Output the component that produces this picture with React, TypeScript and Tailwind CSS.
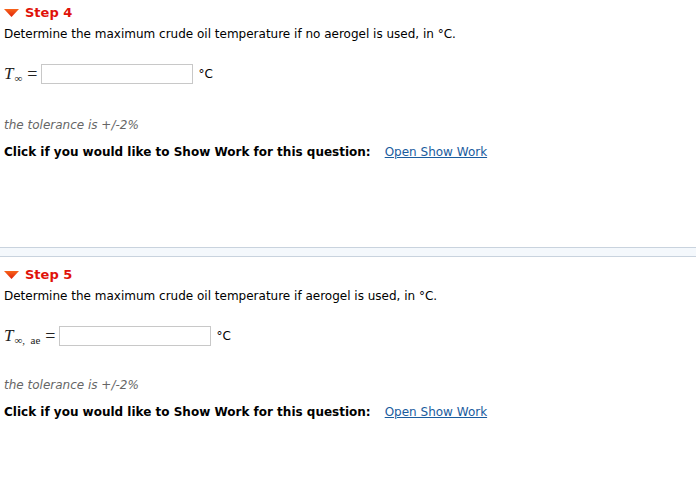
import React from "react";

function Tri() {
  return (
    <svg width="15" height="8" viewBox="0 0 15 8" className="block">
      <defs>
        <linearGradient id="tg" x1="0" y1="0" x2="0" y2="1">
          <stop offset="0" stopColor="#f7641a" />
          <stop offset="1" stopColor="#e0200a" />
        </linearGradient>
      </defs>
      <polygon points="0,0 15,0 7.5,8" fill="url(#tg)" />
    </svg>
  );
}

function Section({
  step,
  desc,
  sub,
  h,
  pt,
  tolMt,
}: {
  step: string;
  desc: string;
  sub: React.ReactNode;
  h: string;
  pt: string;
  tolMt: string;
}) {
  return (
    <div className={`${h} ${pt} px-[4px]`}>
      <div className="flex items-center h-[16px]">
        <Tri />
        <span className="ml-[6px] text-[13px] font-bold text-[#e0120a] leading-[16px]">{step}</span>
      </div>
      <div className="mt-[5px] text-[12px] leading-[16px] text-black">{desc}</div>
      <div className="mt-[22px] flex items-center h-[20px]">
        <span className="font-['Liberation_Serif',serif] text-[17px] italic leading-[20px] text-[#222]">T</span>
        <span className="font-['Liberation_Serif',serif] text-[11px] leading-none mt-[9px] ml-[1px] text-[#222] whitespace-pre">{sub}</span>
        <span className="font-['Liberation_Serif',serif] text-[18px] leading-[20px] ml-[5px] text-[#222]">=</span>
        <div className="ml-[4px] w-[152px] h-[20px] border border-[#c8c8c8] bg-white" />
        <span className="ml-[5px] text-[12px] text-black">°C</span>
      </div>
      <div className={`${tolMt} text-[12px] italic text-[#666] leading-[16px]`}>the tolerance is +/-2%</div>
      <div className="mt-[11px] flex items-center leading-[16px]">
        <span className="text-[12px] font-bold text-black">Click if you would like to Show Work for this question:</span>
        <a href="#" className="ml-[14px] text-[12px] text-[#1a5c9e] underline">Open Show Work</a>
      </div>
    </div>
  );
}

export default function App() {
  return (
    <div className="w-[696px] h-[488px] bg-white font-['DejaVu_Sans',Verdana,sans-serif] overflow-hidden">
      <Section
        h="h-[247px]"
        pt="pt-[5px]"
        tolMt="mt-[33px]"
        step="Step 4"
        desc="Determine the maximum crude oil temperature if no aerogel is used, in °C."
        sub={<>∞</>}
      />
      <div className="h-[10px] border-y border-[#c9d3de] bg-[#f4f8fc]" />
      <Section
        h="h-[231px]"
        pt="pt-[10px]"
        tolMt="mt-[31px]"
        step="Step 5"
        desc="Determine the maximum crude oil temperature if aerogel is used, in °C."
        sub={<>{"∞,  ae"}</>}
      />
    </div>
  );
}
